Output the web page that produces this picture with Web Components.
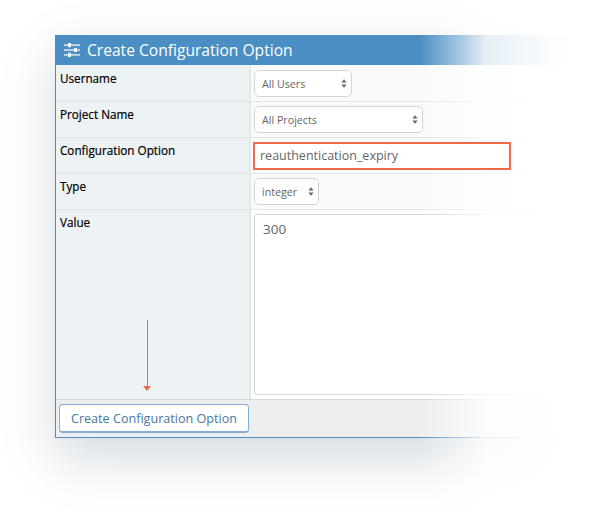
<!DOCTYPE html>
<html>
<head>
<meta charset="utf-8">
<title>Create Configuration Option</title>
<style>
  html, body { margin: 0; background: #fff; }
  body { width: 609px; height: 514px; overflow: hidden; font-family: "Open Sans", sans-serif; }
</style>
</head>
<body>
<config-panel heading="Create Configuration Option">
  <form-row label="Username"><select-box width="98">All Users</select-box></form-row>
  <form-row label="Project Name"><select-box width="169">All Projects</select-box></form-row>
  <form-row label="Configuration Option"><text-box>reauthentication_expiry</text-box></form-row>
  <form-row label="Type"><select-box width="65">integer</select-box></form-row>
  <form-row label="Value" tall><value-box>300</value-box></form-row>
</config-panel>

<script>
class ConfigPanel extends HTMLElement {
  constructor() {
    super();
    this.attachShadow({ mode: 'open' });
  }

  connectedCallback() {
    this.shadowRoot.innerHTML = `
      <style>
        :host {
          display: block;
          position: relative;
          width: 609px;
          height: 514px;
          padding: 35px 0 0 55px;
          box-sizing: border-box;
          overflow: hidden;
        }
        .panel {
          width: 640px;
          border: 1px solid #4b8ec4;
          border-top: 0;
          box-shadow: 0 20px 50px rgba(70, 100, 125, 0.24);
          background: #fff;
        }
        .head {
          display: flex;
          align-items: center;
          height: 30px;
          margin: 0 -1px;
          padding-left: 9px;
          gap: 7px;
          background: #4b8ec4;
          color: #fff;
          font-size: 15.6px;
          line-height: 30px;
        }
        .foot {
          display: flex;
          align-items: flex-start;
          height: 38px;
          padding: 4px 0 0 3px;
          box-sizing: border-box;
          background: #eeeeee;
          border-top: 1px solid #d6d6d6;
        }
        button {
          width: 190px;
          height: 29px;
          padding: 0;
          background: #fff;
          border: 1px solid #85aed3;
          border-bottom-width: 2px;
          border-radius: 4px;
          color: #4a76a0;
          font: 12.6px "Open Sans", sans-serif;
        }
        .fade {
          position: absolute;
          z-index: 1;
          top: 0;
          bottom: 0;
          left: 410px;
          width: 199px;
          background: linear-gradient(to right, rgba(255,255,255,0) 10px, rgba(255,255,255,0.5) 50px, rgba(255,255,255,0.85) 75px, rgba(255,255,255,0.93) 110px, #fff 160px);
        }
        .arrow {
          position: absolute;
          left: 147px;
          top: 320px;
          width: 1px;
          height: 66px;
          background: #ef6a4c;
        }
        .arrow::after {
          content: '';
          position: absolute;
          left: -4px;
          bottom: -5px;
          border: solid transparent;
          border-width: 5px 4.5px 0;
          border-top-color: #ef6a4c;
        }
      </style>
      <div class="panel">
        <div class="head">
          <svg width="16" height="14" viewBox="0 0 16 14" fill="#fff">
            <rect x="0" y="1.5" width="16" height="1.2"/>
            <rect x="4" y="0" width="3" height="4.2" rx="0.6"/>
            <rect x="0" y="6.4" width="16" height="1.2"/>
            <rect x="10" y="4.9" width="3" height="4.2" rx="0.6"/>
            <rect x="0" y="11.3" width="16" height="1.2"/>
            <rect x="4" y="9.8" width="3" height="4.2" rx="0.6"/>
          </svg>
          <span>${this.getAttribute('heading')}</span>
        </div>
        <slot></slot>
        <div class="foot"><button type="button">${this.getAttribute('heading')}</button></div>
      </div>
      <div class="arrow"></div>
      <div class="fade"></div>
    `;
  }
}

class FormRow extends HTMLElement {
  constructor() {
    super();
    this.attachShadow({ mode: 'open' });
  }

  connectedCallback() {
    this.shadowRoot.innerHTML = `
      <style>
        :host {
          display: grid;
          grid-template-columns: 195px 1fr;
          height: 36px;
          box-sizing: border-box;
          border-bottom: 1px solid #e2e5e6;
        }
        :host(:first-child) { height: 37px; }
        :host([tall]) { height: 189px; border-bottom: 0; }
        .label {
          padding: 4px 0 0 4px;
          background: #edf2f5;
          border-right: 2px solid #e4e7e8;
          color: #000;
          font-size: 11.7px;
          font-weight: 500;
          line-height: 17px;
          -webkit-text-stroke: 0.2px #000;
        }
        :host(:first-child) .label { padding-top: 5px; }
        .field { padding: 4px 0 0 3px; background: #fafafa; }
        :host(:first-child) .field { padding-top: 5px; }
        :host([tall]) .field { background: #fff; }
      </style>
      <div class="label">${this.getAttribute('label')}</div>
      <div class="field"><slot></slot></div>
    `;
  }
}

class SelectBox extends HTMLElement {
  constructor() {
    super();
    this.attachShadow({ mode: 'open' });
  }

  connectedCallback() {
    this.shadowRoot.innerHTML = `
      <style>
        :host {
          display: flex;
          align-items: center;
          justify-content: space-between;
          width: ${this.getAttribute('width')}px;
          height: 27px;
          padding: 0 4px 0 7px;
          box-sizing: border-box;
          background: #fff;
          border: 1px solid #d2d5d6;
          border-radius: 5px;
          color: #666;
          font-size: 10.7px;
        }
      </style>
      <slot></slot>
      <svg width="6" height="11" viewBox="0 0 7 11" fill="#666">
        <path d="M3.5 0.5 L6.5 4.3 H0.5 Z M3.5 10.5 L0.5 6.7 H6.5 Z"/>
      </svg>
    `;
  }
}

class TextBox extends HTMLElement {
  constructor() {
    super();
    this.attachShadow({ mode: 'open' });
  }

  connectedCallback() {
    this.shadowRoot.innerHTML = `
      <style>
        :host {
          display: block;
          position: relative;
          z-index: 2;
          width: 258px;
          height: 28px;
          margin: 0 0 0 -1px;
          padding-left: 5px;
          box-sizing: border-box;
          background: #fff;
          border: 2px solid #ef6a4c;
          color: #666;
          font-size: 12.5px;
          line-height: 24px;
        }
      </style>
      <slot></slot>
    `;
  }
}

class ValueBox extends HTMLElement {
  constructor() {
    super();
    this.attachShadow({ mode: 'open' });
  }

  connectedCallback() {
    this.shadowRoot.innerHTML = `
      <style>
        :host {
          display: block;
          width: 340px;
          height: 181px;
          padding: 5px 8px;
          box-sizing: border-box;
          background: #fff;
          border: 1px solid #d2d5d6;
          border-radius: 3px;
          color: #666;
          font-size: 13.5px;
          line-height: 18px;
        }
      </style>
      <slot></slot>
    `;
  }
}

customElements.define('config-panel', ConfigPanel);
customElements.define('form-row', FormRow);
customElements.define('select-box', SelectBox);
customElements.define('text-box', TextBox);
customElements.define('value-box', ValueBox);
</script>
</body>
</html>
